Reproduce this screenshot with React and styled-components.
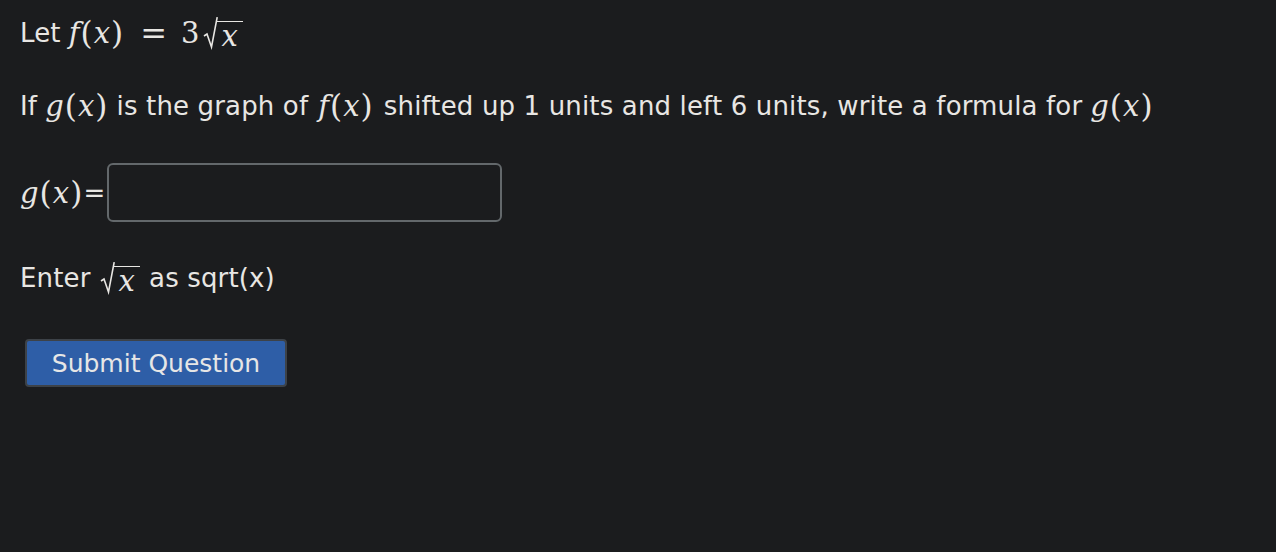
import React from 'react';
import styled, { createGlobalStyle } from 'styled-components';

const Global = createGlobalStyle`
  html, body {
    margin: 0;
    padding: 0;
    background: #1b1c1e;
  }
  body {
    font-family: "DejaVu Sans", Verdana, sans-serif;
    color: #e8e6e3;
  }
`;

const Page = styled.div`
  width: 1276px;
  height: 552px;
  box-sizing: border-box;
  padding: 14px 20px 0 20px;
  background: #1b1c1e;
`;

const Line = styled.div`
  display: flex;
  align-items: center;
  font-size: 26px;
  letter-spacing: 0.15px;
  height: ${(p) => p.h || 38}px;
  margin-bottom: ${(p) => p.gap || 0}px;
  white-space: pre;
`;

const M = styled.span`
  font-family: "DejaVu Serif", "Liberation Serif", serif;
  font-style: ${(p) => (p.up ? 'normal' : 'italic')};
  font-size: ${(p) => p.size || 29}px;
  letter-spacing: 0;
  margin: ${(p) => p.m || '0'};
`;

const Paren = styled.span`
  font-family: "DejaVu Serif", serif;
  font-size: 31px;
  font-style: normal;
  font-weight: 300;
  margin: 0 1px;
`;

const MathGroup = styled.span`
  display: inline-flex;
  align-items: center;
  margin: 0 ${(p) => p.pad ?? 3}px;
`;

const RadWrap = styled.span`
  display: inline-flex;
  align-items: flex-end;
  margin: 0 3px;
`;

const Radicand = styled.span`
  font-family: "DejaVu Serif", serif;
  font-style: italic;
  font-size: 29px;
  border-top: 1.6px solid #e8e6e3;
  line-height: 28px;
  padding: 0 5px 0 5px;
  margin-top: 4px;
`;

const Input = styled.input`
  width: 395px;
  height: 59px;
  box-sizing: border-box;
  background: #1b1c1e;
  border: 2px solid #63686b;
  border-radius: 6px;
  margin-left: 2px;
  outline: none;
  color: #e8e6e3;
  font-size: 22px;
`;

const Button = styled.button`
  display: block;
  margin-left: 5px;
  width: 262px;
  height: 48px;
  box-sizing: border-box;
  background: #2e5ea7;
  border: 2px solid #3d4248;
  border-radius: 4px;
  color: #e6e6e6;
  font-family: "DejaVu Sans", Verdana, sans-serif;
  font-size: 25px;
  padding: 0;
`;

const Sqrt = () => (
  <RadWrap>
    <svg width="15" height="34" viewBox="0 0 15 34" style={{ marginRight: -1 }}>
      <path d="M1 20 L4 18 L8.5 31 L14.2 1.2" fill="none" stroke="#e8e6e3" strokeWidth="1.6" />
    </svg>
    <Radicand>x</Radicand>
  </RadWrap>
);

const Fx = ({ name, pad }) => (
  <MathGroup pad={pad}>
    <M>{name}</M>
    <Paren>(</Paren>
    <M>x</M>
    <Paren>)</Paren>
  </MathGroup>
);

export default function App() {
  return (
    <Page>
      <Global />
      <Line gap={35}>
        Let<Fx name="f" pad={8} />
        <M up size={32} m="0 14px 0 8px">=</M>
        <M up>3</M>
        <Sqrt />
      </Line>
      <Line gap={38}>
        If<Fx name="g" pad={8} />is the graph of<Fx name="f" pad={10} />shifted up 1 units and left 6 units, write a formula for<Fx name="g" pad={8} />
      </Line>
      <Line gap={37} h={59}>
        <Fx name="g" pad={0} />=
        <Input type="text" />
      </Line>
      <Line gap={42}>
        Enter<MathGroup pad={6}><Sqrt /></MathGroup>as sqrt(x)
      </Line>
      <Button>Submit Question</Button>
    </Page>
  );
}
